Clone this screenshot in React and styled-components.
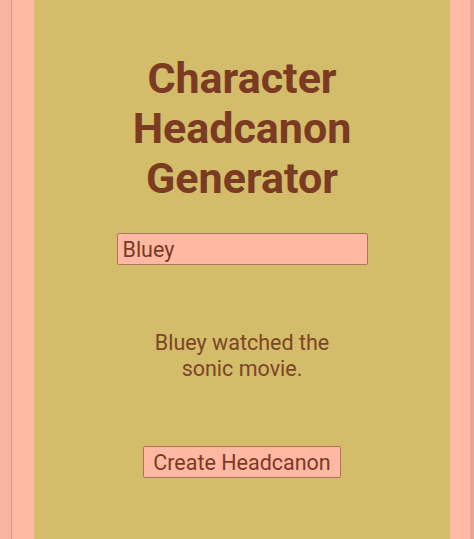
import React, { useState } from "react";
import styled, { createGlobalStyle } from "styled-components";

const GlobalStyle = createGlobalStyle`
  html, body {
    margin: 0;
    padding: 0;
    height: 100%;
    background: #ffb9a5;
    font-family: Roboto, "Liberation Sans", sans-serif;
  }
  #root {
    height: 100%;
  }
`;

const Page = styled.div`
  display: flex;
  height: 539px;
  background: #ffb9a5;
`;

const Gutter = styled.div`
  width: 11px;
  flex-shrink: 0;
  background: #f8b3a1;
  border-right: 1px solid #dc9886;
`;

const Margin = styled.div`
  width: ${(p) => p.$w}px;
  flex-shrink: 0;
`;

const Edge = styled.div`
  width: 4px;
  flex-shrink: 0;
  background: #eaa596;
`;

const Main = styled.main`
  flex: 1;
  background: #d3bc6a;
  display: flex;
  flex-direction: column;
  align-items: center;
  padding-top: 53px;
  color: #7b3a22;
`;

const Title = styled.h1`
  margin: 0;
  max-width: 280px;
  text-align: center;
  font-size: 43px;
  line-height: 50px;
  font-weight: 700;
`;

const NameInput = styled.input`
  margin-top: 30px;
  width: 251px;
  height: 32px;
  box-sizing: border-box;
  padding: 0 5px;
  background: #ffb8a3;
  border: 1px solid #b07458;
  border-radius: 2px;
  font-family: inherit;
  font-size: 21.5px;
  color: #7b3a22;
  outline: none;
`;

const Result = styled.p`
  margin: 65px 0 0;
  max-width: 210px;
  text-align: center;
  font-size: 21.5px;
  line-height: 26px;
  color: #7d4526;
`;

const Button = styled.button`
  margin-top: 64px;
  width: 198px;
  height: 32px;
  padding: 0;
  background: #ffb8a3;
  border: 1px solid #b07458;
  border-radius: 2px;
  font-family: inherit;
  font-size: 21.5px;
  color: #7b3a22;
  cursor: pointer;
`;

export default function App() {
  const [name, setName] = useState("Bluey");
  const [headcanon, setHeadcanon] = useState("Bluey watched the sonic movie.");

  return (
    <>
      <GlobalStyle />
      <Page>
        <Gutter />
        <Margin $w={22} />
        <Main>
          <Title>Character Headcanon Generator</Title>
          <NameInput value={name} onChange={(e) => setName(e.target.value)} />
          <Result>{headcanon}</Result>
          <Button onClick={() => setHeadcanon(`${name} watched the sonic movie.`)}>
            Create Headcanon
          </Button>
        </Main>
        <Margin $w={20} />
        <Edge />
      </Page>
    </>
  );
}
